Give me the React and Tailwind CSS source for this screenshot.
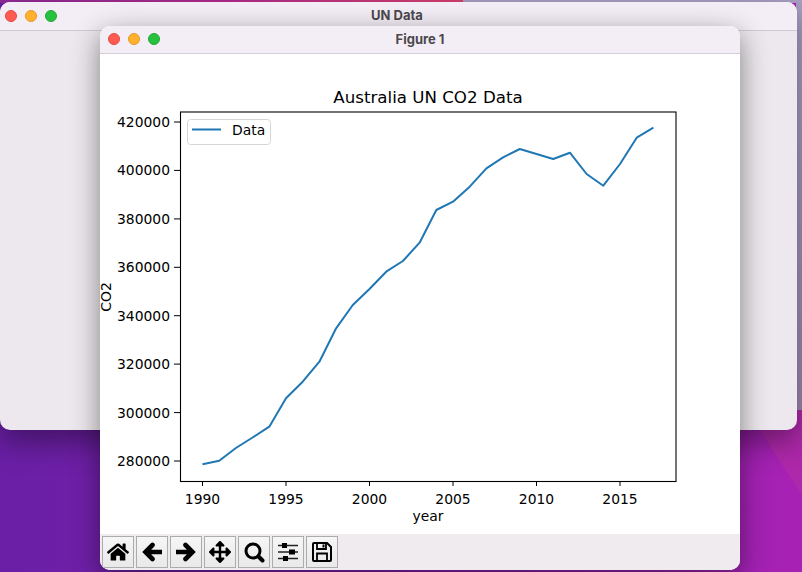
import { FaHome, FaArrowsAlt } from "react-icons/fa";

const points = [
  [102.5, 410.3], [119.2, 406.7], [135.9, 394], [152.6, 383.5], [169.3, 372.7], [186, 344.3], [202.7, 327.7],
  [219.4, 307.7], [236.1, 274.3], [252.8, 251], [269.5, 235], [286.2, 217.7], [302.9, 207], [319.6, 188.7],
  [336.3, 156], [353, 147.7], [369.7, 132.7], [386.4, 114.3], [403.1, 103.3], [419.8, 95], [436.5, 100],
  [453.2, 105], [469.9, 98.7], [486.6, 120], [503.3, 131.7], [520, 110], [536.7, 83.7], [553.4, 73.7],
];
const yTicks = [
  [420000, 68], [400000, 116.4], [380000, 164.9], [360000, 213.3], [340000, 261.7],
  [320000, 310.1], [300000, 358.6], [280000, 407],
];
const xTicks = [
  [1990, 102.5], [1995, 186], [2000, 269.5], [2005, 353], [2010, 436.5], [2015, 520],
];

function BackIcon() {
  return (
    <svg width="20" height="20" viewBox="0 0 20 20">
      <path d="M10.5 3 L3.5 10 L10.5 17 M4 10 H19" fill="none" stroke="#000" strokeWidth="4.6" strokeLinecap="round" />
    </svg>
  );
}

function ForwardIcon() {
  return (
    <svg width="20" height="20" viewBox="0 0 20 20">
      <path d="M9.5 3 L16.5 10 L9.5 17 M16 10 H1" fill="none" stroke="#000" strokeWidth="4.6" strokeLinecap="round" />
    </svg>
  );
}

function SearchIcon() {
  return (
    <svg width="21" height="21" viewBox="0 0 21 21">
      <circle cx="9" cy="9" r="7" fill="none" stroke="#000" strokeWidth="3" />
      <path d="M14.5 14.5 L18.5 18.5" stroke="#000" strokeWidth="4" strokeLinecap="round" />
    </svg>
  );
}

function SlidersIcon() {
  return (
    <svg width="22" height="20" viewBox="0 0 22 20">
      <path d="M1 3.5 H21 M1 10 H21 M1 16.5 H21" stroke="#222" strokeWidth="1.4" />
      <rect x="5" y="1" width="5" height="5" fill="#000" />
      <rect x="12" y="7.5" width="6" height="5" fill="#000" />
      <rect x="6" y="14" width="5" height="5" fill="#000" />
    </svg>
  );
}

function SaveIcon() {
  return (
    <svg width="20" height="20" viewBox="0 0 20 20">
      <path d="M2 1 H15 L19 5 V18 Q19 19 18 19 H2 Q1 19 1 18 V2 Q1 1 2 1 Z" fill="none" stroke="#000" strokeWidth="2" />
      <path d="M5 1.5 V7 H14 V1.5" fill="none" stroke="#000" strokeWidth="1.8" />
      <rect x="10.5" y="2.5" width="2" height="3" fill="#000" />
      <path d="M5 18.5 V11.5 H15 V18.5" fill="none" stroke="#000" strokeWidth="1.8" />
    </svg>
  );
}

const tools = [
  <FaHome size={22} color="#000" />,
  <BackIcon />,
  <ForwardIcon />,
  <FaArrowsAlt size={22} color="#000" />,
  <SearchIcon />,
  <SlidersIcon />,
  <SaveIcon />,
];

function Lights({ className }) {
  return (
    <div className={`flex gap-[8px] ${className}`}>
      <span className="w-3 h-3 rounded-full bg-[#ff5a52] border border-[#e5483f]" />
      <span className="w-3 h-3 rounded-full bg-[#ffb02e] border border-[#e39a25]" />
      <span className="w-3 h-3 rounded-full bg-[#28c03f] border border-[#22a836]" />
    </div>
  );
}

function Plot() {
  return (
    <svg width="640" height="480" className="block shrink-0" style={{ fontFamily: "'DejaVu Sans', sans-serif" }}>
      <text x="328" y="49" fontSize="16.67" textAnchor="middle" fill="#000">Australia UN CO2 Data</text>
      {yTicks.map(([label, y]) => (
        <g key={label}>
          <line x1="74" x2="80" y1={y} y2={y} stroke="#000" />
          <text x="70" y={y + 5} fontSize="13.89" textAnchor="end" fill="#000">{label}</text>
        </g>
      ))}
      {xTicks.map(([label, x]) => (
        <g key={label}>
          <line x1={x} x2={x} y1="427" y2="432" stroke="#000" />
          <text x={x} y="450" fontSize="13.89" textAnchor="middle" fill="#000">{label}</text>
        </g>
      ))}
      <text x="328" y="467" fontSize="13.89" textAnchor="middle" fill="#000">year</text>
      <text x="11" y="243" fontSize="13.89" textAnchor="middle" fill="#000" transform="rotate(-90 11 243)">CO2</text>
      <polyline points={points.map((p) => p.join(",")).join(" ")} fill="none" stroke="#1f77b4" strokeWidth="2" strokeLinejoin="round" />
      <rect x="80.5" y="58" width="495.5" height="369.5" fill="none" stroke="#000" strokeWidth="1.1" />
      <rect x="87.5" y="65.5" width="83" height="25" rx="3" fill="#fff" stroke="#d6d6d6" />
      <line x1="92" x2="121" y1="75.5" y2="75.5" stroke="#1f77b4" strokeWidth="2" />
      <text x="132" y="81" fontSize="13.89" fill="#000">Data</text>
    </svg>
  );
}

export default function App() {
  return (
    <div className="relative w-[802px] h-[572px] overflow-hidden bg-gradient-to-r from-[#6a1fa6] via-[#7f20ac] to-[#a821b4] font-['Inter',sans-serif]">
      {/* wallpaper */}
      <svg className="absolute inset-0" width="802" height="572">
        <polygon points="740,400 802,400 802,495" fill="#ae28aa" />
      </svg>
      <div className="absolute inset-x-0 top-0 h-[3px] flex">
        <div className="w-[463px] bg-gradient-to-r from-[#8f2a98] via-[#b52a8e] to-[#d9406f]" />
        <div className="flex-1 bg-[#a9a0c4]" />
      </div>
      <div className="absolute right-0 top-0 h-[410px] w-[6px] bg-gradient-to-b from-[#a9a0c4] to-[#9c88b0]" />

      {/* UN Data window */}
      <div className="absolute left-0 top-[2px] w-[797px] h-[428px] rounded-[10px] overflow-hidden bg-[#ece8ed] flex flex-col shadow-[0_12px_30px_rgba(0,0,0,0.4)]">
        <div className="relative h-[29px] shrink-0 bg-[#f3eef5] border-b border-[#cfcad2] flex items-center justify-center pr-[3px]">
          <Lights className="absolute left-[5px] top-[8px]" />
          <span className="text-[13px] font-bold text-[#4b484e]">UN Data</span>
        </div>
      </div>

      {/* Figure window */}
      <div className="absolute left-[100px] top-[26px] w-[640px] h-[544px] rounded-[10px] overflow-hidden bg-white flex flex-col shadow-[0_8px_28px_rgba(0,0,0,0.45)]">
        <div className="relative h-[28px] shrink-0 bg-[#f3eef5] border-b border-[#d4cfd6] flex items-center justify-center">
          <Lights className="absolute left-[8px] top-[7px]" />
          <span className="text-[13px] font-bold text-[#4b484e]">Figure 1</span>
        </div>
        <Plot />
        <div className="flex-1 bg-[#efebef] flex items-center gap-[2px] px-[2px]">
          {tools.map((icon, i) => (
            <div key={i} className="w-[32px] h-[32px] border border-[#acacac] bg-gradient-to-b from-[#f6f6f6] to-[#e9e9e9] flex items-center justify-center">
              {icon}
            </div>
          ))}
        </div>
      </div>
    </div>
  );
}
